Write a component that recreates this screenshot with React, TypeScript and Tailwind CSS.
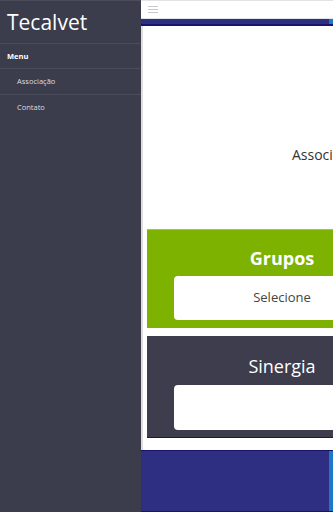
export default function App() {
  const font = { fontFamily: '"Open Sans", "Noto Sans", sans-serif' };
  return (
    <div className="flex h-[512px] w-[333px] overflow-hidden bg-white" style={font}>
      <aside className="flex w-[141px] shrink-0 flex-col border-t border-[#4a4b5b] bg-[#3b3c4c]">
        <div className="flex h-[43px] items-center border-b border-[#4a4b5b] pl-[7px] text-[21px] leading-none text-white">
          Tecalvet
        </div>
        <div className="flex h-[25px] items-center border-b border-[#4a4b5b] pl-[7px] pt-[1px] text-[7.5px] font-bold text-white">
          Menu
        </div>
        <div className="flex h-[26px] items-center border-b border-[#4a4b5b] pl-[17px] text-[7.5px] text-[#dcdce2]">
          Associação
        </div>
        <div className="flex h-[26px] items-center pl-[17px] text-[7.5px] text-[#dcdce2]">
          Contato
        </div>
      </aside>

      <main className="flex w-[192px] shrink-0 flex-col overflow-hidden">
        <div className="flex h-[19px] shrink-0 items-center border-y border-[#e3e3e3] pl-[7px]">
          <div className="flex w-[10px] flex-col gap-[2px]">
            <span className="h-[1px] bg-[#c6c8d0]" />
            <span className="h-[1px] bg-[#c6c8d0]" />
            <span className="h-[1px] bg-[#c6c8d0]" />
          </div>
        </div>
        <div className="flex h-[7px] shrink-0 border-b-2 border-[#16166e] bg-[#2e2e82]">
          <div className="flex-1" />
          <div className="w-[4px] bg-[#1d78c9]" />
        </div>

        <div className="flex flex-1 flex-col border-l-2 border-[#dedede]">
          <div className="flex h-[203px] shrink-0 items-center pl-[149px] pt-[54px] text-[14px] whitespace-nowrap text-[#333]">
            Associação Tecalvet
          </div>

          <div className="ml-[4px] w-[270px] shrink-0 border-t border-[#9fc55a] bg-[#7db200] pb-[8px]">
            <div className="pt-[15px] text-center text-[18px] leading-[26px] font-bold text-white">Grupos</div>
            <div className="mx-[27px] mt-[5px] flex h-[44px] items-center justify-center rounded-[4px] bg-white text-[13px] text-[#444]">
              Selecione
            </div>
          </div>

          <div className="mt-[8px] ml-[4px] w-[270px] shrink-0 border-b border-[#1c1c2c] bg-[#3d3d4e] pb-[7px]">
            <div className="pt-[17px] text-center text-[18px] leading-[26px] text-white">Sinergia</div>
            <div className="mx-[27px] mt-[6px] h-[45px] rounded-[4px] bg-white" />
          </div>

          <div className="h-[11px] shrink-0" />
        </div>

        <div className="flex h-[62px] shrink-0 border-y border-[#15156c] bg-[#2e2e82]">
          <div className="flex-1" />
          <div className="w-[4px] bg-[#1d78c9]" />
        </div>
      </main>
    </div>
  );
}
